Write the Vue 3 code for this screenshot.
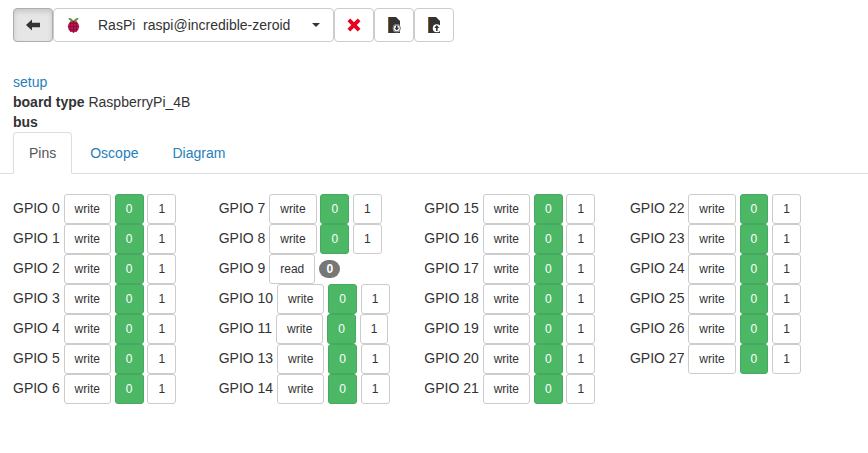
<script setup>
const columns = [
  [
    { n: 0 }, { n: 1 }, { n: 2 }, { n: 3 }, { n: 4 }, { n: 5 }, { n: 6 }
  ],
  [
    { n: 7 }, { n: 8 }, { n: 9, read: true }, { n: 10 }, { n: 11 }, { n: 13 }, { n: 14 }
  ],
  [
    { n: 15 }, { n: 16 }, { n: 17 }, { n: 18 }, { n: 19 }, { n: 20 }, { n: 21 }
  ],
  [
    { n: 22 }, { n: 23 }, { n: 24 }, { n: 25 }, { n: 26 }, { n: 27 }
  ]
]
</script>

<template>
  <div class="page">
    <div class="toolbar">
      <button class="btn tool active">
        <svg width="14" height="12" viewBox="0 0 14 12"><path d="M0 6 L6 0.5 V3.8 H14 V8.2 H6 V11.5 Z" fill="#333" /></svg>
      </button>
      <button class="btn select">
        <svg class="logo" width="13" height="16" viewBox="0 0 14 17">
          <path d="M7 4.5 C5.5 1 3 0.5 1.5 1 C2.5 4 5 5 7 4.5 C9 5 11.5 4 12.5 1 C11 0.5 8.5 1 7 4.5Z" fill="#4f9a35" />
          <ellipse cx="7" cy="10.2" rx="6" ry="6.4" fill="#c2134f" />
          <g fill="#7a0b31">
            <rect x="6.6" y="4" width="0.8" height="13" />
            <rect x="1" y="9.8" width="12" height="0.8" />
            <rect x="2.5" y="6.6" width="9" height="0.7" />
            <rect x="2.5" y="13.2" width="9" height="0.7" />
            <rect x="3.6" y="4.5" width="0.7" height="11.5" />
            <rect x="9.7" y="4.5" width="0.7" height="11.5" />
          </g>
        </svg>
        <span class="select-label">RasPi&nbsp; raspi@incredible-zeroid</span>
        <span class="caret"></span>
      </button>
      <button class="btn tool">
        <svg width="14" height="14" viewBox="0 0 14 14"><path d="M0.5 3.2 L3.2 0.5 L7 4.3 L10.8 0.5 L13.5 3.2 L9.7 7 L13.5 10.8 L10.8 13.5 L7 9.7 L3.2 13.5 L0.5 10.8 L4.3 7Z" fill="#e8001e" /></svg>
      </button>
      <button class="btn tool">
        <svg width="13" height="16" viewBox="0 0 13 16">
          <path d="M0 0 H8 L12 4 V16 H0Z" fill="#333" />
          <path d="M0 0 H1 V16 H0Z" fill="#8a5a1c" />
          <circle cx="8.8" cy="11.2" r="4" fill="#fff" />
          <circle cx="8.8" cy="11.2" r="3.6" fill="none" stroke="#333" stroke-width="0.7" />
          <path d="M8 8.4 H9.6 V10.8 H11.2 L8.8 13.6 L6.4 10.8 H8Z" fill="#333" />
        </svg>
      </button>
      <button class="btn tool">
        <svg width="13" height="16" viewBox="0 0 13 16">
          <path d="M0 0 H8 L12 4 V16 H0Z" fill="#333" />
          <path d="M0 0 H1 V16 H0Z" fill="#8a5a1c" />
          <circle cx="8.8" cy="11.2" r="4" fill="#fff" />
          <path d="M8.8 8 L11.4 11 H9.6 V14 H8 V11 H6.2Z" fill="#333" />
        </svg>
      </button>
    </div>

    <div class="info">
      <a class="link">setup</a>
      <div><b>board type</b> RaspberryPi_4B</div>
      <div><b>bus</b></div>
    </div>

    <ul class="tabs">
      <li class="tab current">Pins</li>
      <li class="tab">Oscope</li>
      <li class="tab">Diagram</li>
    </ul>

    <div class="pins">
      <div v-for="(col, i) in columns" :key="i" class="col">
        <div v-for="pin in col" :key="pin.n" class="pin">
          GPIO {{ pin.n }}
          <button class="btn sm">{{ pin.read ? 'read' : 'write' }}</button>
          <template v-if="pin.read">
            <span class="badge">0</span>
          </template>
          <template v-else>
            <button class="btn sm on">0</button>
            <button class="btn sm">1</button>
          </template>
        </div>
      </div>
    </div>
  </div>
</template>

<style scoped>
.page {
  width: 868px;
  height: 453px;
  box-sizing: border-box;
  padding: 8px 0 0 13px;
  font-family: "Liberation Sans", Arial, sans-serif;
  font-size: 14px;
  line-height: 20px;
  color: #333;
  background: #fff;
  overflow: hidden;
}
.toolbar {
  display: flex;
  height: 34px;
}
.btn {
  font-family: inherit;
  background: #fff;
  border: 1px solid #ccc;
  border-radius: 4px;
  color: #333;
  cursor: pointer;
  box-sizing: border-box;
}
.tool {
  width: 40px;
  height: 34px;
  padding: 0;
  display: flex;
  align-items: center;
  justify-content: center;
}
.active {
  background: #e6e6e6;
  border-color: #adadad;
  box-shadow: inset 0 3px 5px rgba(0, 0, 0, 0.125);
}
.select {
  width: 281px;
  height: 34px;
  padding: 0 0 0 13px;
  font-size: 14px;
  display: flex;
  align-items: center;
  text-align: left;
}
.logo {
  flex: none;
}
.select-label {
  margin-left: 18px;
  white-space: nowrap;
}
.caret {
  margin-left: 22px;
  border-top: 4px solid #333;
  border-left: 4px solid transparent;
  border-right: 4px solid transparent;
}
.info {
  margin-top: 30px;
}
.link {
  color: #2780ba;
  display: block;
}
.tabs {
  list-style: none;
  margin: 0 0 0 -13px;
  padding: 0 0 0 13px;
  display: flex;
  border-bottom: 1px solid #ddd;
}
.tab {
  padding: 10px 15px;
  color: #2780ba;
  border: 1px solid transparent;
  border-radius: 4px 4px 0 0;
  margin-bottom: -1px;
  margin-right: 2px;
}
.tab.current {
  color: #555;
  background: #fff;
  border-color: #ddd #ddd #fff;
}
.pins {
  display: grid;
  grid-template-columns: repeat(4, 205.67px);
  margin-top: 20px;
}
.pin {
  white-space: nowrap;
  height: 30px;
}
.sm {
  display: inline-block;
  height: 30px;
  padding: 5px 10px;
  font-size: 12px;
  line-height: 18px;
  border-radius: 3px;
  vertical-align: middle;
}
.on {
  background: #4cb866;
  border-color: #47a85f;
  color: #fff;
}
.sm + .sm {
  margin-left: 3.9px;
}
.badge {
  display: inline-block;
  box-sizing: border-box;
  width: 21px;
  margin-left: 4px;
  padding: 3px 0;
  font-size: 12px;
  font-weight: bold;
  line-height: 1;
  text-align: center;
  color: #fff;
  background: #777;
  border-radius: 10px;
  vertical-align: middle;
}
</style>
